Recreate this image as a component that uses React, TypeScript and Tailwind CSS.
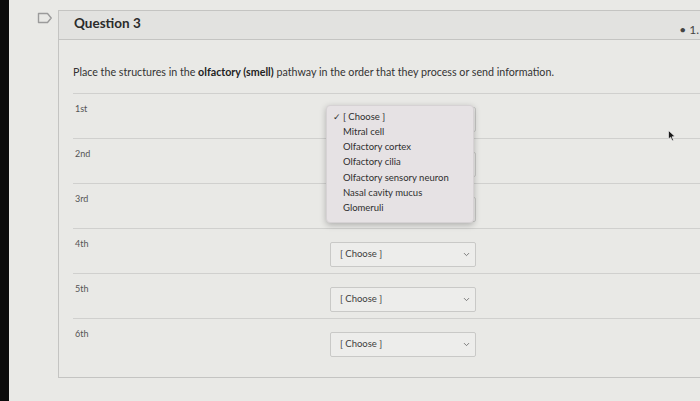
import { ChevronDown } from "lucide-react";

const rows = ["1st", "2nd", "3rd", "4th", "5th", "6th"];
const options = [
  "Mitral cell",
  "Olfactory cortex",
  "Olfactory cilia",
  "Olfactory sensory neuron",
  "Nasal cavity mucus",
  "Glomeruli",
];

// rows 1-3 sit under the open menu, so their text is hidden
const ChooseSelect = ({ covered }: { covered: boolean }) => (
  <div className="flex h-[25px] w-[146px] items-center justify-between rounded-[2px] border border-[#c9c9c7] bg-[#ededeb] pl-[9px] pr-[4px] text-[9.5px] text-[#3d3d3d]">
    <span>{covered ? "" : "[ Choose ]"}</span>
    <ChevronDown className="h-[9px] w-[9px] text-[#666]" strokeWidth={2.2} />
  </div>
);

const App = () => {
  return (
    <div
      className="relative flex h-[401px] w-[700px] overflow-hidden bg-[#e9e9e6]"
      style={{ fontFamily: "Lato, 'Open Sans', sans-serif" }}
    >
      <div className="w-[9px] shrink-0 bg-[#0b0b0b]" />

      {/* bookmark flag */}
      <div className="w-[49px] shrink-0 pl-[28px] pt-[12px]">
        <svg width="16" height="12" viewBox="0 0 16 12">
          <path
            d="M1.5 1.5 H10.5 L14.2 6 L10.5 10.5 H1.5 Z"
            fill="none"
            stroke="#9b9b9b"
            strokeWidth="1.4"
            strokeLinejoin="round"
          />
        </svg>
      </div>

      <div className="mt-[10px] h-[368px] w-[700px] shrink-0 border-b border-l border-t border-[#c4c4c2]">
        <div className="flex h-[29px] items-center justify-between border-b border-[#c4c4c2] bg-[#e2e2e0] pb-[3px] pl-[15px] pr-[6px]">
          <span className="text-[13.5px] font-bold text-[#2b2b2b]">Question 3</span>
          <span className="mr-[53px] mt-[12px] text-[12px] text-[#444]">• 1.</span>
        </div>

        <div className="pl-[14px]">
          <p className="border-b border-[#d0d0ce] pb-[13px] pt-[24px] text-[10.7px] text-[#333]">
            Place the structures in the <b className="font-bold text-[#222]">olfactory (smell)</b> pathway in
            the order that they process or send information.
          </p>

          {rows.map((label, i) => (
            <div
              key={label}
              className={`flex h-[45px] ${i < rows.length - 1 ? "border-b border-[#d0d0ce]" : ""}`}
            >
              <div className="w-[257px] shrink-0 pl-[2px] pt-[8px] text-[9px] text-[#555]">{label}</div>
              <div className="pt-[13px]">
                <ChooseSelect covered={i < 3} />
              </div>
            </div>
          ))}
        </div>
      </div>

      {/* open dropdown menu */}
      <div className="absolute left-[326px] top-[105px] w-[148px] rounded-[4px] border border-[#d6d2d4] bg-[#e6e2e4] pb-[6px] pt-[3px] text-[9.5px] text-[#2e2e2e] shadow-[0_2px_6px_rgba(0,0,0,0.25)]">
        <div className="flex h-[15.3px] items-center">
          <span className="w-[16px] pl-[6px] text-[9px]">✓</span>
          <span>[ Choose ]</span>
        </div>
        {options.map((o) => (
          <div key={o} className="flex h-[15.3px] items-center pl-[16px]">
            {o}
          </div>
        ))}
      </div>

      {/* mouse pointer */}
      <svg className="absolute left-[668px] top-[130px]" width="8" height="12" viewBox="0 0 8 12">
        <path d="M0.5 0.5 L0.5 9 L2.6 7.2 L4.2 10.8 L5.5 10.2 L4 6.8 L7 6.6 Z" fill="#1a1a1a" stroke="#fff" strokeWidth="0.6" />
      </svg>
    </div>
  );
};

export default App;
